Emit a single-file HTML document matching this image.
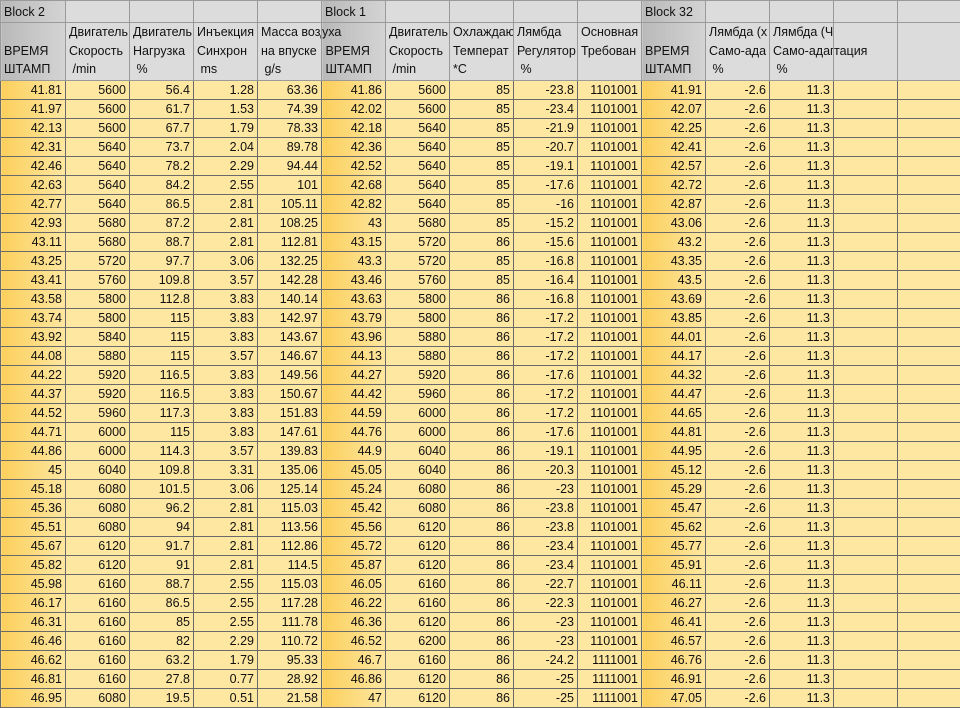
<!DOCTYPE html>
<html><head><meta charset="utf-8"><style>
body{margin:0;background:#fff;width:960px;height:708px;overflow:hidden}
table{border-collapse:collapse;table-layout:fixed;width:961px;font-family:"Liberation Sans",sans-serif;font-size:12.5px;color:#111;position:absolute;left:0;top:0}
td{border:1px solid #6a6a6a;padding:0 3px 0 3px;white-space:nowrap;overflow:hidden;height:18px;line-height:18px;text-align:right;background:#fee7a0}
td.t{background:linear-gradient(to right,#fbcf5c,#fee7a0)}
tr.h1 td{height:21px;background:#dcdcdc;text-align:left;border-color:#9a9a9a}
tr.h2 td{height:55px;background:#dcdcdc;text-align:left;vertical-align:bottom;line-height:18.7px;border-color:#9a9a9a;padding-bottom:1px}
tr.h1 td.t,tr.h2 td.t{background:linear-gradient(to right,#b9b9b9,#d4d4d4)}
</style></head><body>
<table>
<colgroup><col style="width:65px"><col style="width:64px"><col style="width:64px"><col style="width:64px"><col style="width:64px"><col style="width:64px"><col style="width:64px"><col style="width:64px"><col style="width:64px"><col style="width:64px"><col style="width:64px"><col style="width:64px"><col style="width:64px"><col style="width:64px"><col style="width:64px"></colgroup>
<tr class="h1"><td class="t">Block 2</td><td></td><td></td><td></td><td></td><td class="t">Block 1</td><td></td><td></td><td></td><td></td><td class="t">Block 32</td><td></td><td></td><td></td><td></td></tr>
<tr class="h2"><td class="t"><br>ВРЕМЯ<br>ШТАМП</td><td>Двигатель<br>Скорость<br>&nbsp;/min</td><td>Двигатель<br>Нагрузка<br>&nbsp;%</td><td>Инъекция<br>Синхрон<br>&nbsp;ms</td><td>Масса возд<br>на впуске<br>&nbsp;g/s</td><td class="t" style="padding-left:0">уха<br>&nbsp;ВРЕМЯ<br>&nbsp;ШТАМП</td><td>Двигатель<br>Скорость<br>&nbsp;/min</td><td>Охлаждающ<br>Температ<br>*C</td><td>Лямбда<br>Регулятор<br>&nbsp;%</td><td>Основная<br>Требован<br>&nbsp;</td><td class="t"><br>ВРЕМЯ<br>ШТАМП</td><td>Лямбда (х<br>Само-ада<br>&nbsp;%</td><td>Лямбда (Ч<br>Само-адап<br>&nbsp;%</td><td style="padding-left:0"><br>тация<br>&nbsp;</td><td></td></tr>
<tr><td class="t">41.81</td><td>5600</td><td>56.4</td><td>1.28</td><td>63.36</td><td class="t">41.86</td><td>5600</td><td>85</td><td>-23.8</td><td>1101001</td><td class="t">41.91</td><td>-2.6</td><td>11.3</td><td></td><td></td></tr>
<tr><td class="t">41.97</td><td>5600</td><td>61.7</td><td>1.53</td><td>74.39</td><td class="t">42.02</td><td>5600</td><td>85</td><td>-23.4</td><td>1101001</td><td class="t">42.07</td><td>-2.6</td><td>11.3</td><td></td><td></td></tr>
<tr><td class="t">42.13</td><td>5600</td><td>67.7</td><td>1.79</td><td>78.33</td><td class="t">42.18</td><td>5640</td><td>85</td><td>-21.9</td><td>1101001</td><td class="t">42.25</td><td>-2.6</td><td>11.3</td><td></td><td></td></tr>
<tr><td class="t">42.31</td><td>5640</td><td>73.7</td><td>2.04</td><td>89.78</td><td class="t">42.36</td><td>5640</td><td>85</td><td>-20.7</td><td>1101001</td><td class="t">42.41</td><td>-2.6</td><td>11.3</td><td></td><td></td></tr>
<tr><td class="t">42.46</td><td>5640</td><td>78.2</td><td>2.29</td><td>94.44</td><td class="t">42.52</td><td>5640</td><td>85</td><td>-19.1</td><td>1101001</td><td class="t">42.57</td><td>-2.6</td><td>11.3</td><td></td><td></td></tr>
<tr><td class="t">42.63</td><td>5640</td><td>84.2</td><td>2.55</td><td>101</td><td class="t">42.68</td><td>5640</td><td>85</td><td>-17.6</td><td>1101001</td><td class="t">42.72</td><td>-2.6</td><td>11.3</td><td></td><td></td></tr>
<tr><td class="t">42.77</td><td>5640</td><td>86.5</td><td>2.81</td><td>105.11</td><td class="t">42.82</td><td>5640</td><td>85</td><td>-16</td><td>1101001</td><td class="t">42.87</td><td>-2.6</td><td>11.3</td><td></td><td></td></tr>
<tr><td class="t">42.93</td><td>5680</td><td>87.2</td><td>2.81</td><td>108.25</td><td class="t">43</td><td>5680</td><td>85</td><td>-15.2</td><td>1101001</td><td class="t">43.06</td><td>-2.6</td><td>11.3</td><td></td><td></td></tr>
<tr><td class="t">43.11</td><td>5680</td><td>88.7</td><td>2.81</td><td>112.81</td><td class="t">43.15</td><td>5720</td><td>86</td><td>-15.6</td><td>1101001</td><td class="t">43.2</td><td>-2.6</td><td>11.3</td><td></td><td></td></tr>
<tr><td class="t">43.25</td><td>5720</td><td>97.7</td><td>3.06</td><td>132.25</td><td class="t">43.3</td><td>5720</td><td>85</td><td>-16.8</td><td>1101001</td><td class="t">43.35</td><td>-2.6</td><td>11.3</td><td></td><td></td></tr>
<tr><td class="t">43.41</td><td>5760</td><td>109.8</td><td>3.57</td><td>142.28</td><td class="t">43.46</td><td>5760</td><td>85</td><td>-16.4</td><td>1101001</td><td class="t">43.5</td><td>-2.6</td><td>11.3</td><td></td><td></td></tr>
<tr><td class="t">43.58</td><td>5800</td><td>112.8</td><td>3.83</td><td>140.14</td><td class="t">43.63</td><td>5800</td><td>86</td><td>-16.8</td><td>1101001</td><td class="t">43.69</td><td>-2.6</td><td>11.3</td><td></td><td></td></tr>
<tr><td class="t">43.74</td><td>5800</td><td>115</td><td>3.83</td><td>142.97</td><td class="t">43.79</td><td>5800</td><td>86</td><td>-17.2</td><td>1101001</td><td class="t">43.85</td><td>-2.6</td><td>11.3</td><td></td><td></td></tr>
<tr><td class="t">43.92</td><td>5840</td><td>115</td><td>3.83</td><td>143.67</td><td class="t">43.96</td><td>5880</td><td>86</td><td>-17.2</td><td>1101001</td><td class="t">44.01</td><td>-2.6</td><td>11.3</td><td></td><td></td></tr>
<tr><td class="t">44.08</td><td>5880</td><td>115</td><td>3.57</td><td>146.67</td><td class="t">44.13</td><td>5880</td><td>86</td><td>-17.2</td><td>1101001</td><td class="t">44.17</td><td>-2.6</td><td>11.3</td><td></td><td></td></tr>
<tr><td class="t">44.22</td><td>5920</td><td>116.5</td><td>3.83</td><td>149.56</td><td class="t">44.27</td><td>5920</td><td>86</td><td>-17.6</td><td>1101001</td><td class="t">44.32</td><td>-2.6</td><td>11.3</td><td></td><td></td></tr>
<tr><td class="t">44.37</td><td>5920</td><td>116.5</td><td>3.83</td><td>150.67</td><td class="t">44.42</td><td>5960</td><td>86</td><td>-17.2</td><td>1101001</td><td class="t">44.47</td><td>-2.6</td><td>11.3</td><td></td><td></td></tr>
<tr><td class="t">44.52</td><td>5960</td><td>117.3</td><td>3.83</td><td>151.83</td><td class="t">44.59</td><td>6000</td><td>86</td><td>-17.2</td><td>1101001</td><td class="t">44.65</td><td>-2.6</td><td>11.3</td><td></td><td></td></tr>
<tr><td class="t">44.71</td><td>6000</td><td>115</td><td>3.83</td><td>147.61</td><td class="t">44.76</td><td>6000</td><td>86</td><td>-17.6</td><td>1101001</td><td class="t">44.81</td><td>-2.6</td><td>11.3</td><td></td><td></td></tr>
<tr><td class="t">44.86</td><td>6000</td><td>114.3</td><td>3.57</td><td>139.83</td><td class="t">44.9</td><td>6040</td><td>86</td><td>-19.1</td><td>1101001</td><td class="t">44.95</td><td>-2.6</td><td>11.3</td><td></td><td></td></tr>
<tr><td class="t">45</td><td>6040</td><td>109.8</td><td>3.31</td><td>135.06</td><td class="t">45.05</td><td>6040</td><td>86</td><td>-20.3</td><td>1101001</td><td class="t">45.12</td><td>-2.6</td><td>11.3</td><td></td><td></td></tr>
<tr><td class="t">45.18</td><td>6080</td><td>101.5</td><td>3.06</td><td>125.14</td><td class="t">45.24</td><td>6080</td><td>86</td><td>-23</td><td>1101001</td><td class="t">45.29</td><td>-2.6</td><td>11.3</td><td></td><td></td></tr>
<tr><td class="t">45.36</td><td>6080</td><td>96.2</td><td>2.81</td><td>115.03</td><td class="t">45.42</td><td>6080</td><td>86</td><td>-23.8</td><td>1101001</td><td class="t">45.47</td><td>-2.6</td><td>11.3</td><td></td><td></td></tr>
<tr><td class="t">45.51</td><td>6080</td><td>94</td><td>2.81</td><td>113.56</td><td class="t">45.56</td><td>6120</td><td>86</td><td>-23.8</td><td>1101001</td><td class="t">45.62</td><td>-2.6</td><td>11.3</td><td></td><td></td></tr>
<tr><td class="t">45.67</td><td>6120</td><td>91.7</td><td>2.81</td><td>112.86</td><td class="t">45.72</td><td>6120</td><td>86</td><td>-23.4</td><td>1101001</td><td class="t">45.77</td><td>-2.6</td><td>11.3</td><td></td><td></td></tr>
<tr><td class="t">45.82</td><td>6120</td><td>91</td><td>2.81</td><td>114.5</td><td class="t">45.87</td><td>6120</td><td>86</td><td>-23.4</td><td>1101001</td><td class="t">45.91</td><td>-2.6</td><td>11.3</td><td></td><td></td></tr>
<tr><td class="t">45.98</td><td>6160</td><td>88.7</td><td>2.55</td><td>115.03</td><td class="t">46.05</td><td>6160</td><td>86</td><td>-22.7</td><td>1101001</td><td class="t">46.11</td><td>-2.6</td><td>11.3</td><td></td><td></td></tr>
<tr><td class="t">46.17</td><td>6160</td><td>86.5</td><td>2.55</td><td>117.28</td><td class="t">46.22</td><td>6160</td><td>86</td><td>-22.3</td><td>1101001</td><td class="t">46.27</td><td>-2.6</td><td>11.3</td><td></td><td></td></tr>
<tr><td class="t">46.31</td><td>6160</td><td>85</td><td>2.55</td><td>111.78</td><td class="t">46.36</td><td>6120</td><td>86</td><td>-23</td><td>1101001</td><td class="t">46.41</td><td>-2.6</td><td>11.3</td><td></td><td></td></tr>
<tr><td class="t">46.46</td><td>6160</td><td>82</td><td>2.29</td><td>110.72</td><td class="t">46.52</td><td>6200</td><td>86</td><td>-23</td><td>1101001</td><td class="t">46.57</td><td>-2.6</td><td>11.3</td><td></td><td></td></tr>
<tr><td class="t">46.62</td><td>6160</td><td>63.2</td><td>1.79</td><td>95.33</td><td class="t">46.7</td><td>6160</td><td>86</td><td>-24.2</td><td>1111001</td><td class="t">46.76</td><td>-2.6</td><td>11.3</td><td></td><td></td></tr>
<tr><td class="t">46.81</td><td>6160</td><td>27.8</td><td>0.77</td><td>28.92</td><td class="t">46.86</td><td>6120</td><td>86</td><td>-25</td><td>1111001</td><td class="t">46.91</td><td>-2.6</td><td>11.3</td><td></td><td></td></tr>
<tr><td class="t">46.95</td><td>6080</td><td>19.5</td><td>0.51</td><td>21.58</td><td class="t">47</td><td>6120</td><td>86</td><td>-25</td><td>1111001</td><td class="t">47.05</td><td>-2.6</td><td>11.3</td><td></td><td></td></tr>
</table>
</body></html>
